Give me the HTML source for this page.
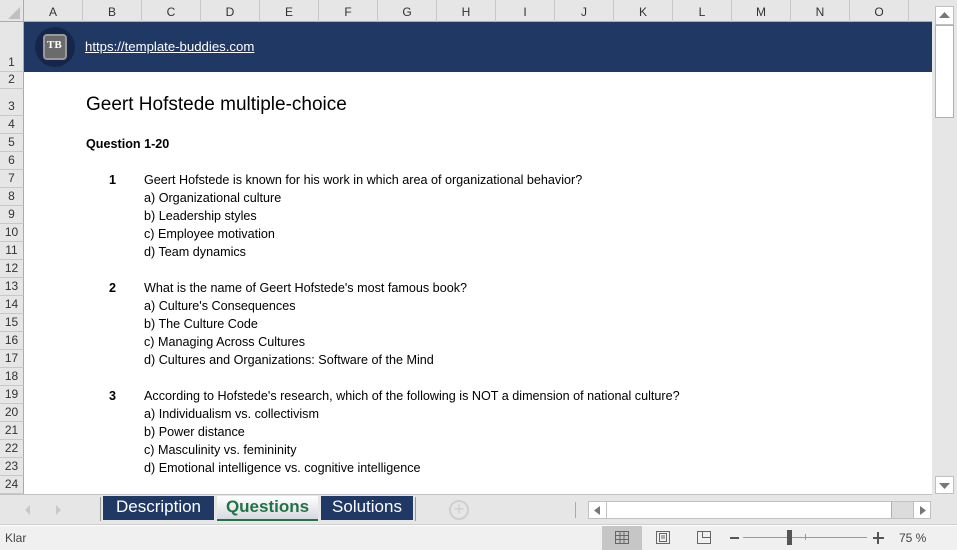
<!DOCTYPE html>
<html><head><style>
*{margin:0;padding:0;box-sizing:border-box}
body{width:957px;height:550px;overflow:hidden;background:#fff;font-family:"Liberation Sans",sans-serif;position:relative}
.a{position:absolute}
.ch{top:0;height:22px;background:#e6e6e6;border-bottom:1px solid #ababab}
.cl{top:0;height:22px;font-size:12px;color:#333;text-align:center;line-height:24px;border-right:1px solid #c8c8c8}
.rl{left:0;width:24px;font-size:12px;color:#333;text-align:center;background:#e6e6e6;border-bottom:1px solid #c8c8c8;border-right:1px solid #ababab;display:flex;align-items:flex-end;justify-content:center;line-height:17px}
.t{font-size:12.6px;color:#000;white-space:nowrap;line-height:18px}
</style></head><body>
<div class="a ch" style="left:0;width:932px"></div>
<div class="a" style="left:0;top:0;width:24px;height:22px;background:#e6e6e6;border-right:1px solid #ababab;border-bottom:1px solid #ababab"></div>
<svg class="a" style="left:8px;top:7px" width="12" height="12"><polygon points="12,0 12,12 0,12" fill="#c0c0c0"/></svg>
<div id="cols"></div>
<div id="rows"></div>
<div class="a" style="left:24px;top:22px;width:908px;height:50px;background:#203864"></div>
<div class="a" style="left:35px;top:27px;width:40px;height:40px;border-radius:50%;background:#16264a"></div>
<div class="a" style="left:43px;top:34px;width:24px;height:26px;border-radius:4px;background:#6b6b6b;border:2px solid #999"></div>
<div class="a" style="left:47px;top:39px;font-size:11px;color:#fff;font-family:'Liberation Serif',serif;font-weight:bold">TB</div>
<div class="a" style="left:85px;top:39px;font-size:13.2px;color:#fff;text-decoration:underline">https://template-buddies.com</div>
<div class="a" style="left:86px;top:94px;font-size:19px;color:#000">Geert Hofstede multiple-choice</div>
<div class="a t" style="left:86px;top:135px;font-weight:bold">Question 1-20</div>
<div id="q"></div>
<div class="a" style="left:932px;top:0;width:25px;height:494px;background:#e6e6e6"></div>
<div class="a" style="left:935px;top:6px;width:19px;height:19px;background:#fff;border:1px solid #c0c0c0"></div>
<svg class="a" style="left:939px;top:12px" width="11" height="6"><polygon points="0,6 11,6 5.5,0" fill="#777"/></svg>
<div class="a" style="left:935px;top:25px;width:19px;height:93px;background:#fff;border:1px solid #b0b0b0"></div>
<div class="a" style="left:935px;top:476px;width:19px;height:18px;background:#fff;border:1px solid #c0c0c0"></div>
<svg class="a" style="left:939px;top:483px" width="11" height="6"><polygon points="0,0 11,0 5.5,6" fill="#777"/></svg>
<div class="a" style="left:0;top:494px;width:957px;height:31px;background:#e6e6e6;border-bottom:1px solid #cfcfcf"></div>
<div class="a" style="left:0;top:494px;width:932px;height:1px;background:#c0c0c0"></div>
<svg class="a" style="left:24px;top:505px" width="40" height="10"><polygon points="6,0 6,10 1,5" fill="#c8c8c8"/><polygon points="32,0 32,10 37,5" fill="#c8c8c8"/></svg>
<div class="a" style="left:100px;top:497px;width:1px;height:24px;background:#999"></div>
<div class="a" style="left:103px;top:496px;width:111px;height:24px;background:#203864;color:#fff;font-size:17px;text-align:center;line-height:22px">Description</div>
<div class="a" style="left:217px;top:496px;width:101px;height:25px;background:linear-gradient(#fff,#d6d9e0);border-bottom:2px solid #217346;color:#217346;font-size:17px;font-weight:bold;text-align:center;line-height:22px">Questions</div>
<div class="a" style="left:321px;top:496px;width:92px;height:24px;background:#203864;color:#fff;font-size:17px;text-align:center;line-height:22px">Solutions</div>
<div class="a" style="left:415px;top:497px;width:1px;height:24px;background:#999"></div>
<div class="a" style="left:449px;top:500px;width:20px;height:20px;border-radius:50%;border:2px solid #cfcfcf;color:#cfcfcf;font-size:18px;line-height:15px;text-align:center">+</div>
<div class="a" style="left:575px;top:502px;width:1px;height:16px;background:#aaa"></div>
<div class="a" style="left:588px;top:501px;width:343px;height:18px;background:#dcdcdc;border:1px solid #c0c0c0"></div>
<div class="a" style="left:589px;top:502px;width:18px;height:16px;background:#fff;border-right:1px solid #c0c0c0"></div>
<svg class="a" style="left:594px;top:506px" width="6" height="9"><polygon points="6,0 6,9 0,4.5" fill="#777"/></svg>
<div class="a" style="left:607px;top:502px;width:285px;height:16px;background:#fff;border-right:1px solid #b0b0b0"></div>
<div class="a" style="left:913px;top:502px;width:17px;height:16px;background:#fff;border-left:1px solid #c0c0c0"></div>
<svg class="a" style="left:920px;top:506px" width="6" height="9"><polygon points="0,0 0,9 6,4.5" fill="#777"/></svg>
<div class="a" style="left:0;top:526px;width:957px;height:24px;background:#f0f0f0"></div>
<div class="a" style="left:5px;top:531px;font-size:12px;color:#444">Klar</div>
<div class="a" style="left:602px;top:526px;width:40px;height:24px;background:#c6c6c6"></div>
<svg class="a" style="left:615px;top:531px" width="14" height="13" fill="none" stroke="#666"><rect x=".5" y=".5" width="13" height="12"/><path d="M5 0v13M9 0v13M0 4.5h14M0 8.5h14"/></svg>
<svg class="a" style="left:656px;top:531px" width="14" height="13" fill="none" stroke="#666"><rect x=".5" y=".5" width="13" height="12"/><rect x="3.5" y="2.5" width="7" height="8"/><path d="M5 5h4M5 7h4"/></svg>
<svg class="a" style="left:697px;top:531px" width="14" height="13" fill="none" stroke="#666"><path d="M.5 .5h13v12H.5z M5.5 .5v6h8"/></svg>
<div class="a" style="left:730px;top:537px;width:9px;height:2px;background:#555"></div>
<div class="a" style="left:743px;top:537px;width:124px;height:1px;background:#999"></div>
<div class="a" style="left:787px;top:530px;width:5px;height:15px;background:#555"></div>
<div class="a" style="left:805px;top:534px;width:1px;height:6px;background:#999"></div>
<div class="a" style="left:873px;top:537px;width:11px;height:2px;background:#555"></div>
<div class="a" style="left:877px;top:532px;width:2px;height:12px;background:#555"></div>
<div class="a" style="left:899px;top:531px;font-size:12px;color:#444">75 %</div>
<script>
var L="ABCDEFGHIJKLMNO",h="";
for(var i=0;i<15;i++){h+='<div class="a cl" style="left:'+(24+i*59)+'px;width:59px">'+L[i]+'</div>';}
document.getElementById('cols').innerHTML=h;
var r="";
var hs=[[22,50],[72,17],[89,27]];
for(var k=4;k<=24;k++){hs.push([116+(k-4)*18,18]);}
for(var k=0;k<24;k++){r+='<div class="a rl" style="top:'+hs[k][0]+'px;height:'+hs[k][1]+'px">'+(k+1)+'</div>';}
document.getElementById('rows').innerHTML=r;
var Q=[[7,1,"Geert Hofstede is known for his work in which area of organizational behavior?","a) Organizational culture","b) Leadership styles","c) Employee motivation","d) Team dynamics"],
[13,2,"What is the name of Geert Hofstede's most famous book?","a) Culture's Consequences","b) The Culture Code","c) Managing Across Cultures","d) Cultures and Organizations: Software of the Mind"],
[19,3,"According to Hofstede's research, which of the following is NOT a dimension of national culture?","a) Individualism vs. collectivism","b) Power distance","c) Masculinity vs. femininity","d) Emotional intelligence vs. cognitive intelligence"]];
var q="";
Q.forEach(function(e){var t=116+(e[0]-4)*18+1;q+='<div class="a t" style="left:109px;top:'+t+'px;font-weight:bold">'+e[1]+'</div>';
for(var j=2;j<7;j++){q+='<div class="a t" style="left:144px;top:'+(t+(j-2)*18)+'px">'+e[j]+'</div>';}});
document.getElementById('q').innerHTML=q;
</script>
</body></html>
